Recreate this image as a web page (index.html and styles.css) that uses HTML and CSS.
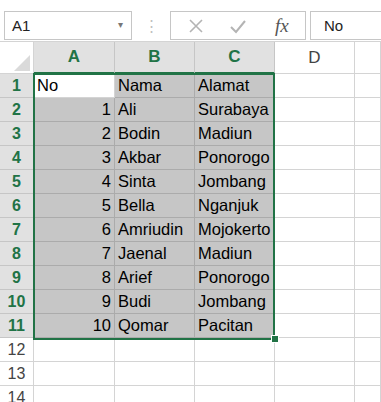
FILE: index.html
```html
<!DOCTYPE html>
<html lang="id">

<head>
    <meta charset="UTF-8">
    <meta name="viewport" content="width=device-width, initial-scale=1.0">
    <title>Sheet1</title>
    <link rel="stylesheet" href="styles.css">
</head>

<body>
    <div class="formula-bar">
        <div class="name-box">
            <span>A1</span>
            <span class="caret">&#9662;</span>
        </div>
        <div class="grip">&#8942;</div>
        <div class="fx-buttons">
            <svg class="btn-icon" width="16" height="16" viewBox="0 0 16 16">
                <path d="M2 2 L14 14 M14 2 L2 14" stroke="#b4b4b4" stroke-width="1.6" fill="none" />
            </svg>
            <svg class="btn-icon" width="18" height="16" viewBox="0 0 18 16">
                <path d="M2 9 L7 14 L16 3" stroke="#b4b4b4" stroke-width="2" fill="none" />
            </svg>
            <span class="fx">fx</span>
        </div>
        <div class="formula-input">No</div>
    </div>

    <div class="sheet">
        <div class="grid" id="grid"></div>
        <div class="selection"></div>
        <div class="fill-handle"></div>
    </div>

    <script>
        const data = [
            ['No', 'Nama', 'Alamat'],
            [1, 'Ali', 'Surabaya'],
            [2, 'Bodin', 'Madiun'],
            [3, 'Akbar', 'Ponorogo'],
            [4, 'Sinta', 'Jombang'],
            [5, 'Bella', 'Nganjuk'],
            [6, 'Amriudin', 'Mojokerto'],
            [7, 'Jaenal', 'Madiun'],
            [8, 'Arief', 'Ponorogo'],
            [9, 'Budi', 'Jombang'],
            [10, 'Qomar', 'Pacitan']
        ];
        // a coluna E fica quase toda fora da janela
        const cols = ['A', 'B', 'C', 'D', ''];
        const grid = document.getElementById('grid');
        let html = '<div class="cell corner"><svg width="34" height="31"><path d="M30 13 L30 29 L14 29 Z" fill="#dadada"/></svg></div>';

        cols.forEach((c, i) => {
            html += `<div class="cell col-head ${i < 3 ? 'sel' : ''}">${c}</div>`;
        });

        for (let r = 1; r <= 14; r++) {
            const row = data[r - 1];
            html += `<div class="cell row-head ${row ? 'sel' : ''}">${r}</div>`;
            for (let c = 0; c < 5; c++) {
                const val = row && c < 3 ? row[c] : '';
                let cls = 'cell';
                if (row && c < 3) cls += (r === 1 && c === 0) ? ' active' : ' in-sel';
                if (typeof val === 'number') cls += ' num';
                html += `<div class="${cls}">${val}</div>`;
            }
        }
        grid.innerHTML = html;
    </script>
</body>

</html>
```

FILE: styles.css
```css
body {
    margin: 0;
    background: #ffffff;
    font-family: "Liberation Sans", Arial, sans-serif;
    overflow: hidden;
    width: 381px;
    height: 402px;
}

/* barra de formula */
.formula-bar {
    display: flex;
    align-items: stretch;
    height: 41px;
    padding: 11px 0 0 4px;
    box-sizing: border-box;
}

.formula-bar > div {
    height: 29px;
    box-sizing: border-box;
    flex: none;
}

.name-box {
    width: 128px;
    border: 1px solid #c6c6c6;
    display: flex;
    align-items: center;
    justify-content: space-between;
    padding: 0 8px 0 7px;
    font-size: 15px;
    color: #222;
}

.caret {
    font-size: 10px;
    color: #777;
    margin-top: -3px;
}

.grip {
    width: 38px;
    text-align: center;
    color: #c0c0c0;
    font-size: 15px;
    line-height: 29px;
}

.fx-buttons {
    width: 136px;
    border: 1px solid #c6c6c6;
    display: flex;
    align-items: center;
    padding: 0 10px 0 17px;
    gap: 25px;
}

.fx {
    font-family: "Liberation Serif", "Times New Roman", serif;
    font-style: italic;
    font-size: 19px;
    color: #555;
    margin-left: 3px;
}

.formula-input {
    flex: 1 1 auto !important;
    margin-left: 4px;
    border: 1px solid #c6c6c6;
    border-right: none;
    padding-left: 13px;
    font-size: 15px;
    line-height: 27px;
    color: #222;
}

/* planilha */
.sheet {
    position: relative;
    border-top: 1px solid #d4d4d4;
}

.grid {
    display: grid;
    grid-template-columns: 34px 81px 80px 80px 80px 26px;
    grid-template-rows: 32px;
    grid-auto-rows: 24px;
}

.cell {
    box-sizing: border-box;
    border-right: 1px solid #d4d4d4;
    border-bottom: 1px solid #d4d4d4;
    font-size: 16.5px;
    line-height: 23px;
    padding: 0 3px;
    white-space: nowrap;
    overflow: hidden;
    color: #000;
}

.corner {
    padding: 0;
    background: #fff;
}

.corner svg {
    display: block;
}

.col-head {
    text-align: center;
    font-size: 17px;
    line-height: 31px;
    color: #444;
    background: #fff;
}

.col-head.sel {
    background: #e1e1e1;
    color: #217346;
    font-weight: bold;
    border-bottom: 2px solid #217346;
    border-right-color: #c6c6c6;
    line-height: 30px;
}

.row-head {
    text-align: center;
    font-size: 16px;
    color: #444;
    padding: 0;
}

.row-head.sel {
    background: #e1e1e1;
    color: #217346;
    font-weight: bold;
    border-bottom-color: #c6c6c6;
}

.in-sel {
    background: #c6c6c6;
    border-color: #ababab;
}

.active {
    background: #fff;
}

.num {
    text-align: right;
}

.selection {
    position: absolute;
    left: 33px;
    top: 31px;
    width: 242px;
    height: 267px;
    border: 2px solid #217346;
    box-sizing: border-box;
    pointer-events: none;
}

.fill-handle {
    position: absolute;
    left: 271px;
    top: 293px;
    width: 6px;
    height: 6px;
    background: #217346;
    border: 1px solid #fff;
}
```
